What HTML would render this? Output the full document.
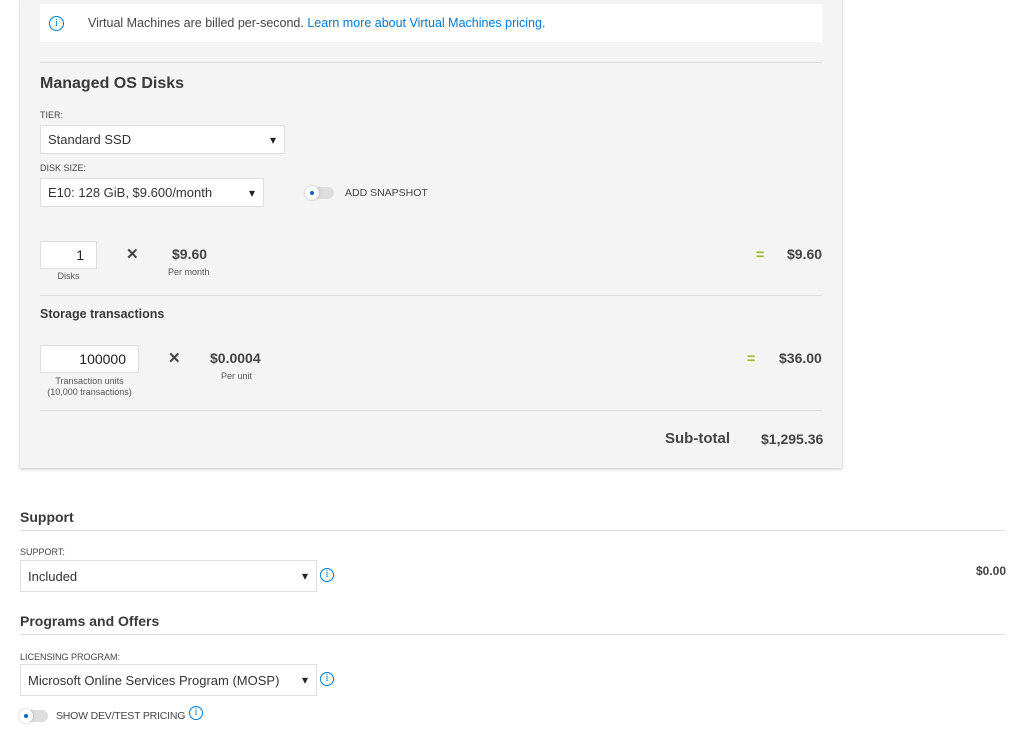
<!DOCTYPE html>
<html><head><style>
*{box-sizing:border-box;margin:0;padding:0}
body{width:1024px;height:732px;background:#fff;font-family:"Liberation Sans",sans-serif;color:#333;position:relative;overflow:hidden}
.a{position:absolute}
.panel{left:20px;top:-2px;width:822px;height:470px;background:#f4f4f4;box-shadow:0 1px 3px rgba(0,0,0,.25)}
.hr{height:1px;background:#ddd}
.sel{background:#fff;border:1px solid #ddd;font-size:13px;padding-left:7px;display:flex;align-items:center;color:#333}
.sel:after{content:"▾";position:absolute;right:8px;font-size:12px;color:#222}
.lbl{font-size:9px;color:#444}
.inp{background:#fff;border:1px solid #ddd;font-size:14px;text-align:right;padding-right:12px;display:flex;align-items:center;justify-content:flex-end;color:#222}
.small{font-size:9px;color:#555;text-align:center}
.price{font-size:14px;font-weight:bold;color:#444}
.eq{font-size:14px;font-weight:bold;color:#8cb800}
.x{font-size:15px;font-weight:bold;color:#444}
.tog{width:28px;height:12px;background:#ddd;border-radius:6px}
.tog:before{content:"";position:absolute;left:-1px;top:-1px;width:14px;height:14px;border-radius:7px;background:#fff;box-shadow:0 0 2px rgba(0,0,0,.3)}
.tog:after{content:"";position:absolute;left:4px;top:4px;width:4px;height:4px;border-radius:2px;background:#0066cc}
.info{width:14px;height:14px;border:1px solid #0078d4;border-radius:50%;color:#0078d4;font-size:10px;text-align:center;line-height:12px;font-family:"Liberation Serif",serif}
h3{position:absolute;font-size:14px;font-weight:bold;color:#3a3a3a}
</style></head><body>
<div class="a panel"></div>
<div class="a" style="left:40px;top:4px;width:782px;height:38px;background:#fff"></div>
<div class="a info" style="left:49px;top:16px;width:15px;height:15px;line-height:13px">i</div>
<div class="a" style="left:88px;top:16px;font-size:12.5px;color:#444">Virtual Machines are billed per-second. <span style="color:#0078d4">Learn more about Virtual Machines pricing.</span></div>
<div class="a hr" style="left:40px;top:62px;width:782px"></div>
<h3 style="left:40px;top:75px;font-size:16px">Managed OS Disks</h3>
<div class="a lbl" style="left:40px;top:110px">TIER:</div>
<div class="a sel" style="left:40px;top:125px;width:245px;height:29px">Standard SSD</div>
<div class="a lbl" style="left:40px;top:163px">DISK SIZE:</div>
<div class="a sel" style="left:40px;top:178px;width:224px;height:29px">E10: 128 GiB, $9.600/month</div>
<div class="a tog" style="left:306px;top:187px"></div>
<div class="a" style="left:345px;top:187px;font-size:10.5px;color:#444">ADD SNAPSHOT</div>
<div class="a inp" style="left:40px;top:241px;width:57px;height:28px">1</div>
<div class="a small" style="left:40px;top:271px;width:57px">Disks</div>
<div class="a x" style="left:126px;top:245px">✕</div>
<div class="a price" style="left:172px;top:246px">$9.60</div>
<div class="a small" style="left:168px;top:267px">Per month</div>
<div class="a eq" style="left:756px;top:246px">=</div>
<div class="a price" style="left:787px;top:246px">$9.60</div>
<div class="a hr" style="left:40px;top:295px;width:782px"></div>
<h3 style="left:40px;top:307px;font-size:12.5px">Storage transactions</h3>
<div class="a inp" style="left:40px;top:345px;width:99px;height:28px">100000</div>
<div class="a small" style="left:40px;top:376px;width:99px;line-height:11px">Transaction units<br>(10,000 transactions)</div>
<div class="a x" style="left:168px;top:349px">✕</div>
<div class="a price" style="left:210px;top:350px">$0.0004</div>
<div class="a small" style="left:221px;top:371px">Per unit</div>
<div class="a eq" style="left:747px;top:350px">=</div>
<div class="a price" style="left:779px;top:350px">$36.00</div>
<div class="a hr" style="left:40px;top:410px;width:782px"></div>
<div class="a" style="left:665px;top:430px;font-size:15px;font-weight:bold;color:#444">Sub-total</div>
<div class="a price" style="left:761px;top:431px">$1,295.36</div>

<h3 style="left:20px;top:509px">Support</h3>
<div class="a hr" style="left:20px;top:530px;width:986px"></div>
<div class="a lbl" style="left:20px;top:547px">SUPPORT:</div>
<div class="a sel" style="left:20px;top:560px;width:297px;height:32px">Included</div>
<div class="a info" style="left:320px;top:568px">i</div>
<div class="a" style="right:18px;top:564px;font-size:12px;font-weight:bold;color:#444">$0.00</div>
<h3 style="left:20px;top:613px">Programs and Offers</h3>
<div class="a hr" style="left:20px;top:634px;width:986px"></div>
<div class="a lbl" style="left:20px;top:652px">LICENSING PROGRAM:</div>
<div class="a sel" style="left:20px;top:664px;width:297px;height:32px">Microsoft Online Services Program (MOSP)</div>
<div class="a info" style="left:320px;top:672px">i</div>
<div class="a tog" style="left:20px;top:710px"></div>
<div class="a" style="left:56px;top:710px;font-size:10.5px;color:#444;letter-spacing:-0.2px">SHOW DEV/TEST PRICING</div>
<div class="a info" style="left:189px;top:706px">i</div>
</body></html>
